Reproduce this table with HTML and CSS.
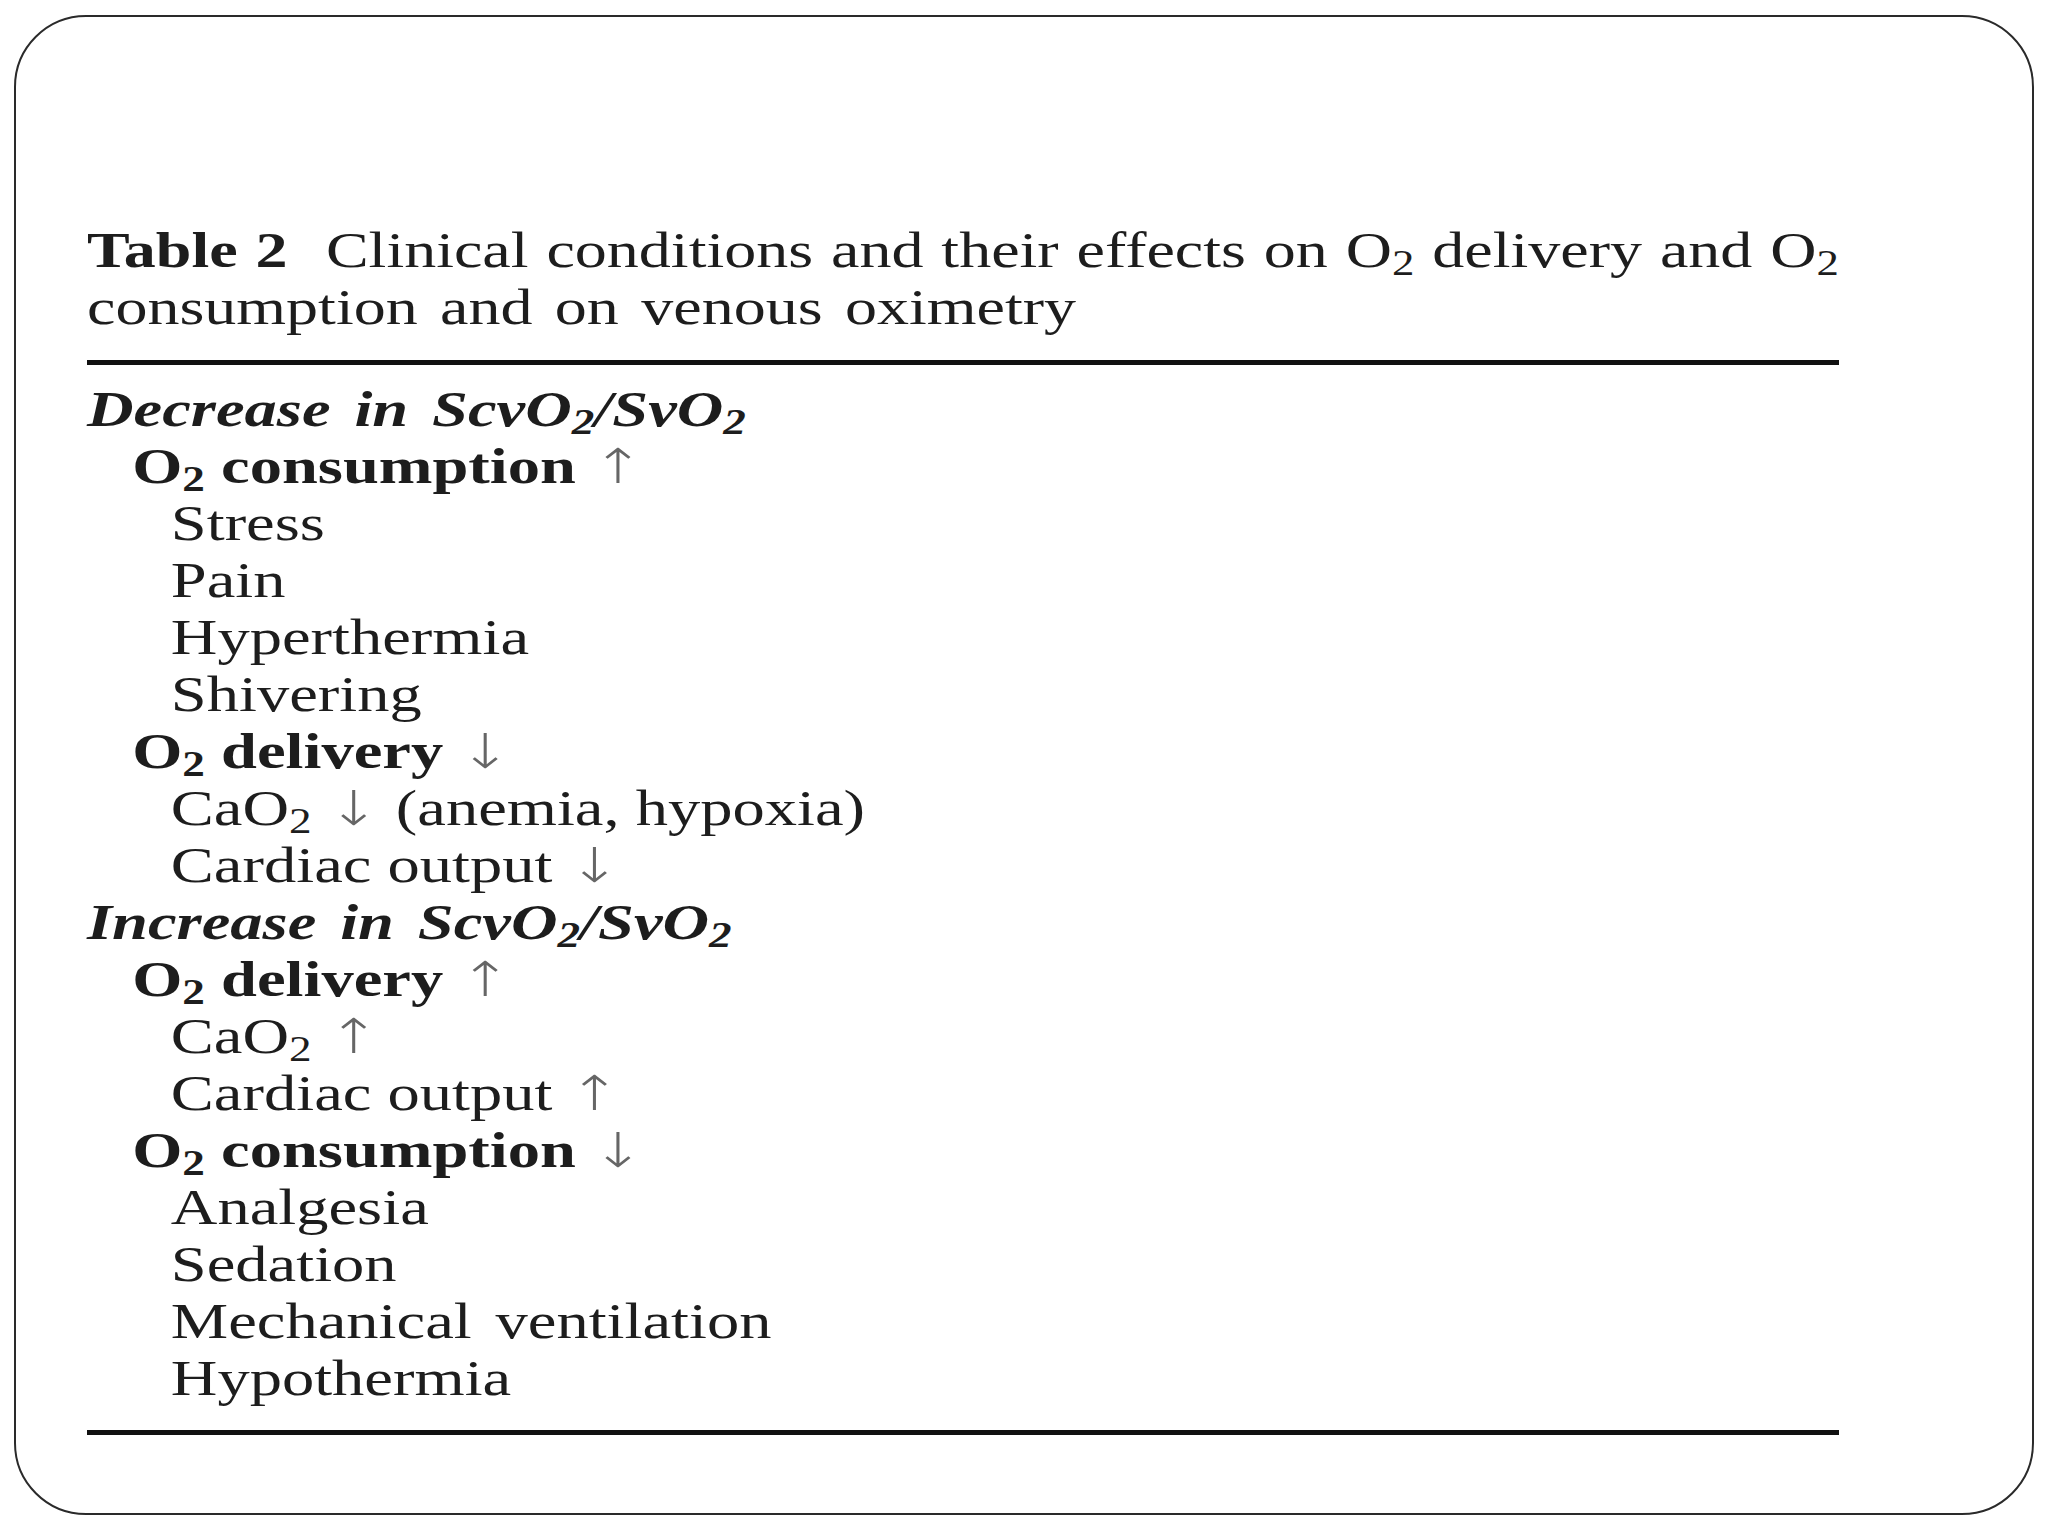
FILE: index.html
```html
<!DOCTYPE html>
<html lang="en">
<head>
<meta charset="utf-8">
<title>Table 2 – Clinical conditions and venous oximetry</title>
<link rel="stylesheet" href="styles.css">
</head>
<body>
<div class="slide">
  <div class="table">
    <div class="caption">
      <div class="cap-line cap-first"><b class="cap-label">Table 2</b>Clinical conditions and their effects on O<sub>2</sub> delivery and O<sub>2</sub></div>
      <div class="cap-line cap-second">consumption and on venous oximetry</div>
    </div>
    <div class="rule rule-top"></div>
    <div class="rows">
      <div class="row l0">Decrease in ScvO<sub>2</sub>/SvO<sub>2</sub></div>
      <div class="row l1">O<sub>2</sub> consumption <span class="arr">↑</span></div>
      <div class="row l2">Stress</div>
      <div class="row l2">Pain</div>
      <div class="row l2">Hyperthermia</div>
      <div class="row l2">Shivering</div>
      <div class="row l1">O<sub>2</sub> delivery <span class="arr">↓</span></div>
      <div class="row l2">CaO<sub>2</sub> <span class="arr">↓</span> (anemia, hypoxia)</div>
      <div class="row l2">Cardiac output <span class="arr">↓</span></div>
      <div class="row l0">Increase in ScvO<sub>2</sub>/SvO<sub>2</sub></div>
      <div class="row l1">O<sub>2</sub> delivery <span class="arr">↑</span></div>
      <div class="row l2">CaO<sub>2</sub> <span class="arr">↑</span></div>
      <div class="row l2">Cardiac output <span class="arr">↑</span></div>
      <div class="row l1">O<sub>2</sub> consumption <span class="arr">↓</span></div>
      <div class="row l2">Analgesia</div>
      <div class="row l2">Sedation</div>
      <div class="row l2 wide">Mechanical ventilation</div>
      <div class="row l2">Hypothermia</div>
    </div>
    <div class="rule rule-bottom"></div>
  </div>
</div>
</body>
</html>
```

FILE: styles.css
```css
html, body {
  margin: 0;
  padding: 0;
  background: #ffffff;
}

body {
  width: 2048px;
  height: 1536px;
  overflow: hidden;
  font-family: "Liberation Serif", "Times New Roman", serif;
  color: #1d1d1d;
}

.slide {
  box-sizing: border-box;
  width: 2020px;
  height: 1500px;
  margin: 15px 0 0 14px;
  border: 2px solid #2a2a2a;
  border-radius: 72px;
  padding: 205px 0 0 71px;
}

.table {
  width: 1752px;
}

.caption {
  width: max-content;
  font-size: 50px;
  line-height: 57px;
  white-space: nowrap;
  transform: scaleX(1.28);
  transform-origin: left top;
}

.cap-first {
  word-spacing: 1.5px;
}

.cap-second {
  word-spacing: 5px;
}

.cap-label {
  font-weight: bold;
  margin-right: 30px;
}

sub {
  font-size: 0.7em;
  line-height: 0;
  vertical-align: -0.22em;
}

.rule {
  height: 5px;
  background: #111111;
}

.rule-top {
  margin-top: 24px;
}

.rule-bottom {
  margin-top: 23px;
}

.rows {
  width: max-content;
  margin-top: 16px;
  font-size: 50px;
  line-height: 57px;
  white-space: nowrap;
  transform: scaleX(1.29);
  transform-origin: left top;
}

.l0 {
  font-weight: bold;
  font-style: italic;
  word-spacing: 6px;
}

.l1 {
  font-weight: bold;
  padding-left: 35px;
}

.l2 {
  padding-left: 65px;
}

.wide {
  word-spacing: 6px;
}

.arr {
  font-family: "DejaVu Sans", sans-serif;
  font-size: 48px;
  font-weight: 200;
  font-style: normal;
  color: #666666;
}
```
